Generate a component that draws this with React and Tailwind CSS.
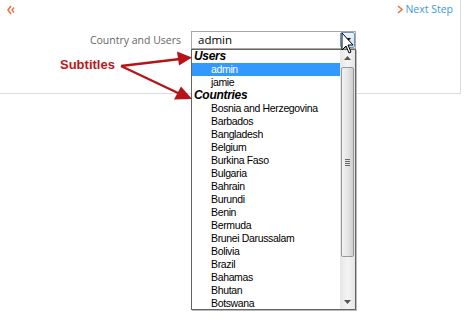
import React from "react";

const countries = [
  "Bosnia and Herzegovina","Barbados","Bangladesh","Belgium","Burkina Faso","Bulgaria","Bahrain","Burundi","Benin","Bermuda","Brunei Darussalam","Bolivia","Brazil","Bahamas","Bhutan","Botswana",
];

function Header({ children }) {
  return (
    <div className="h-[13px] leading-[13px] pl-[2px] font-bold italic text-[12px] text-black tracking-[-0.3px]">{children}</div>
  );
}
function Item({ children, selected }) {
  return (
    <div className={selected ? "h-[13px] leading-[13px] pl-[19px] bg-[#3399ff] text-white tracking-[-0.35px]" : "h-[13px] leading-[13px] pl-[19px] text-black tracking-[-0.35px]"}>{children}</div>
  );
}

export default function App() {
  return (
    <div className="relative w-[474px] h-[326px] bg-white overflow-hidden" style={{ fontFamily: '"Open Sans", sans-serif' }}>
      <div className="w-[461px] h-[94px] border-r border-b border-[#dcdcdc] flex flex-col">
        <div className="flex justify-between items-start pl-[7px] pr-[7px] pt-[2px] h-[16px]">
          <svg width="8" height="10" viewBox="0 0 8 10" className="mt-[3px]">
            <path d="M4 1 L1 5 L4 9" stroke="#e8734a" strokeWidth="1.6" fill="none" />
            <path d="M7 2.5 L5 5 L7 7.5" stroke="#e8734a" strokeWidth="1.4" fill="none" />
          </svg>
          <div className="flex items-center gap-[1px] text-[10.5px] leading-[14px] text-[#3b9ad9]">
            <svg width="7" height="9" viewBox="0 0 7 9">
              <path d="M1 1 L5 4.5 L1 8" stroke="#e8734a" strokeWidth="1.6" fill="none" />
            </svg>
            <span>Next Step</span>
          </div>
        </div>
        <div className="flex items-start mt-[15px]">
          <div className="w-[181px] text-right text-[10.5px] leading-[18px] text-[#666]">Country and Users</div>
          <div className="relative ml-[10px] w-[165px] h-[18px] border border-[#a9a9a9] bg-white" style={{ fontFamily: '"Liberation Sans", Arial, sans-serif' }}>
            <div className="pl-[6px] text-[11.5px] leading-[16px] text-black" style={{ fontFamily: '"Open Sans", sans-serif' }}>admin</div>
            <div className="absolute right-[0px] top-[0px] w-[15px] h-[16px] border border-[#6e94b8] rounded-[2px] bg-gradient-to-b from-[#eaf4fc] to-[#c6dff3] flex items-center justify-center">
              <svg width="7" height="4" viewBox="0 0 7 4"><path d="M0 0 H7 L3.5 4 Z" fill="#111" /></svg>
            </div>
            <div className="absolute left-[-1px] top-[17px] w-[165px] h-[261px] border border-[#646464] bg-white flex text-[10.5px] shadow-[1px_1px_0_#bbb]">
              <div className="flex-1 flex flex-col">
                <Header>Users</Header>
                <Item selected>admin</Item>
                <Item>jamie</Item>
                <Header>Countries</Header>
                {countries.map((c) => (
                  <Item key={c}>{c}</Item>
                ))}
              </div>
              <div className="w-[15px] h-full bg-gradient-to-r from-[#e6e6e6] via-[#f4f4f4] to-[#e6e6e6] flex flex-col items-center">
                <div className="h-[15px] w-full flex items-center justify-center">
                  <svg width="7" height="4" viewBox="0 0 7 4"><path d="M0 4 H7 L3.5 0 Z" fill="#555" /></svg>
                </div>
                <div className="mt-[2px] w-[13px] h-[190px] rounded-[2px] border border-[#979797] bg-gradient-to-r from-[#f2f2f2] via-[#e6e6e6] to-[#cfcfcf] flex items-center justify-center">
                  <div className="flex flex-col gap-[1px]">
                    <div className="w-[5px] h-[1px] bg-[#666]" />
                    <div className="w-[5px] h-[1px] bg-[#666]" />
                    <div className="w-[5px] h-[1px] bg-[#666]" />
                    <div className="w-[5px] h-[1px] bg-[#666]" />
                  </div>
                </div>
                <div className="flex-1" />
                <div className="h-[15px] w-full flex items-center justify-center">
                  <svg width="7" height="4" viewBox="0 0 7 4"><path d="M0 0 H7 L3.5 4 Z" fill="#555" /></svg>
                </div>
              </div>
            </div>
          </div>
        </div>
      </div>

      <div className="absolute left-[60px] top-[57px] text-[13px] font-bold text-[#c0141a] leading-[16px]" style={{ fontFamily: '"Liberation Sans", Arial, sans-serif' }}>Subtitles</div>

      <svg className="absolute left-0 top-0 pointer-events-none" width="474" height="326" viewBox="0 0 474 326">
        <g stroke="#b51419" strokeWidth="2.4" fill="none">
          <line x1="121" y1="66" x2="180" y2="59" />
          <line x1="121" y1="66" x2="178" y2="93" />
        </g>
        <path d="M192 57.5 L177 51.5 L179 65.5 Z" fill="#b51419" />
        <path d="M192 99 L174 99.5 L181 86.5 Z" fill="#b51419" />
        <path d="M342 33 L342 50 L346 46 L349 53 L351 52 L348 45 L353 45 Z" fill="#fff" stroke="#000" strokeWidth="1" strokeLinejoin="round" />
      </svg>
    </div>
  );
}
